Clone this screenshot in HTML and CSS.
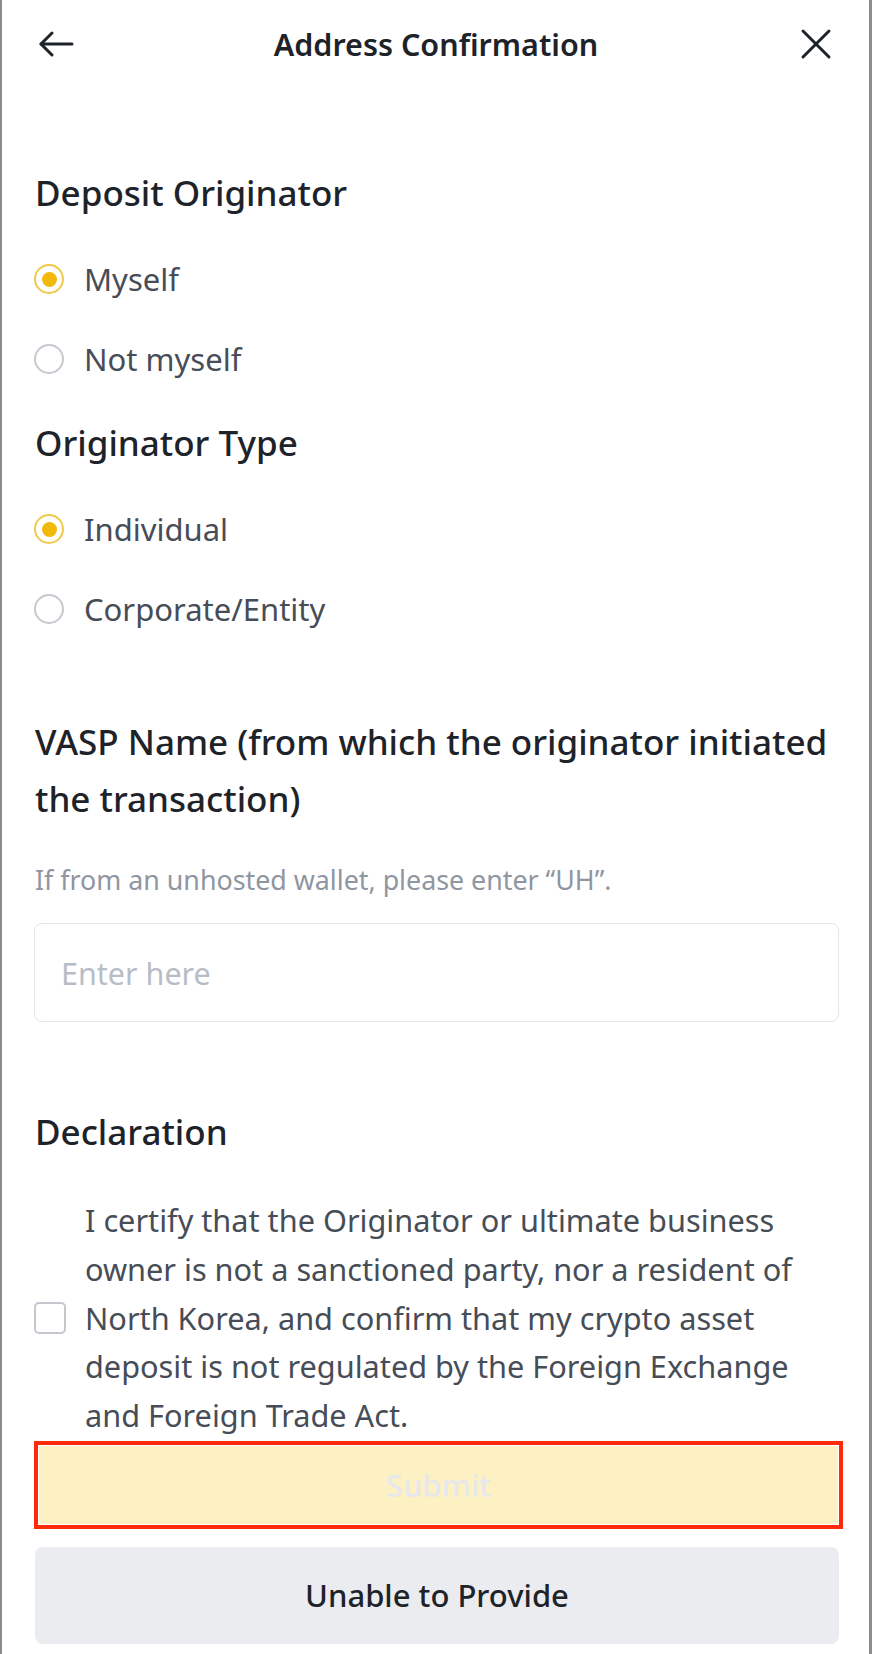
FILE: index.html
```html
<!DOCTYPE html>
<html lang="en">

<head>
    <meta charset="UTF-8">
    <meta name="viewport" content="width=device-width, initial-scale=1.0">
    <title>Address Confirmation</title>
    <link rel="stylesheet" href="styles.css">
</head>

<body>
    <div class="screen">
        <header class="topbar">
            <button class="icon-btn" aria-label="Back">
                <svg width="36" height="28" viewBox="0 0 36 28" fill="none" stroke="#1e2329" stroke-width="3" stroke-linecap="round" stroke-linejoin="round">
                    <path d="M34 14H3"/>
                    <path d="M14 3L3 14l11 11"/>
                </svg>
            </button>
            <h1>Address Confirmation</h1>
            <button class="icon-btn" aria-label="Close">
                <svg width="32" height="32" viewBox="0 0 32 32" fill="none" stroke="#1e2329" stroke-width="3" stroke-linecap="round">
                    <path d="M3 3l26 26"/>
                    <path d="M29 3L3 29"/>
                </svg>
            </button>
        </header>

        <main class="content">
            <h2 class="section-title">Deposit Originator</h2>
            <div class="radio-group">
                <label class="radio-row">
                    <span class="radio checked"></span>
                    Myself
                </label>
                <label class="radio-row">
                    <span class="radio"></span>
                    Not myself
                </label>
            </div>

            <h2 class="section-title">Originator Type</h2>
            <div class="radio-group">
                <label class="radio-row">
                    <span class="radio checked"></span>
                    Individual
                </label>
                <label class="radio-row">
                    <span class="radio"></span>
                    Corporate/Entity
                </label>
            </div>

            <h2 class="section-title vasp-title">VASP Name (from which the originator initiated the transaction)</h2>
            <p class="hint">If from an unhosted wallet, please enter “UH”.</p>
            <input class="text-input" type="text" placeholder="Enter here">

            <h2 class="section-title declaration-title">Declaration</h2>
            <label class="declaration-row">
                <span class="checkbox"></span>
                <span class="declaration-text">I certify that the Originator or ultimate business owner is not a sanctioned party, nor a resident of North Korea, and confirm that my crypto asset deposit is not regulated by the Foreign Exchange and Foreign Trade Act.</span>
            </label>

            <button class="btn btn-submit" disabled>Submit</button>
            <button class="btn btn-secondary">Unable to Provide</button>
        </main>
    </div>
</body>

</html>
```

FILE: styles.css
```css
/* 页面基本样式 */
body {
    font-family: "Noto Sans", "Open Sans", sans-serif;
    background-color: #fff;
    margin: 0;
    padding: 0;
}

.screen {
    min-height: 1654px;
    box-sizing: border-box;
    border-left: 2px solid #8c8c8c;
    border-right: 3px solid #8c8c8c;
}

/* 顶部导航 */
.topbar {
    height: 88px;
    display: flex;
    align-items: center;
    justify-content: space-between;
    padding: 0 35px 0 36px;
}

.topbar h1 {
    margin: 0;
    font-size: 30.5px;
    font-weight: 600;
    color: #1e2329;
}

.icon-btn {
    width: 36px;
    height: 36px;
    padding: 0;
    border: none;
    background: none;
    display: flex;
    align-items: center;
    justify-content: center;
}

/* 表单内容 */
.content {
    padding: 85px 30px 0 33px;
}

.section-title {
    margin: 0 0 26px;
    font-size: 35px;
    line-height: 40px;
    font-weight: 500;
    color: #1e2329;
}

.radio-group + .section-title {
    margin-top: 24px;
}

.radio-row {
    height: 80px;
    display: flex;
    align-items: center;
    gap: 20px;
    font-size: 31px;
    color: #474d57;
}

.radio {
    width: 30px;
    height: 30px;
    margin-left: -1px;
    box-sizing: border-box;
    border: 2px solid #c5c8ce;
    border-radius: 50%;
    display: flex;
    align-items: center;
    justify-content: center;
}

.radio.checked {
    border-color: #f0c94a;
}

.radio.checked::after {
    content: "";
    width: 15px;
    height: 15px;
    border-radius: 50%;
    background-color: #f0b90b;
}

.vasp-title {
    margin-top: 64px !important;
    margin-bottom: 0;
    line-height: 57px;
}

.hint {
    margin: 38px 0 0;
    font-size: 26.8px;
    line-height: 30px;
    color: #8f96a1;
}

.text-input {
    display: block;
    width: calc(100% + 1px);
    height: 99px;
    margin: 28px 0 0 -1px;
    padding: 0 26px;
    box-sizing: border-box;
    border: 1px solid #e4e6e9;
    border-radius: 8px;
    font-family: inherit;
    font-size: 30.5px;
    color: #1e2329;
}

.text-input::placeholder {
    color: #b7bdc6;
}

.declaration-title {
    margin: 90px 0 0;
}

.declaration-row {
    display: flex;
    align-items: center;
    gap: 19px;
    margin-top: 44px;
}

.checkbox {
    flex: none;
    width: 32px;
    height: 32px;
    margin-left: -1px;
    box-sizing: border-box;
    border: 2px solid #c5c8ce;
    border-radius: 5px;
}

.declaration-text {
    font-size: 30.7px;
    line-height: 48.75px;
    color: #474d57;
}

/* 按钮 */
.btn {
    display: block;
    width: 100%;
    font-family: inherit;
    font-size: 31px;
    font-weight: 500;
    border-radius: 8px;
    cursor: pointer;
}

.btn-submit {
    width: calc(100% + 5px);
    height: 88px;
    margin: 1px 0 0 -1px;
    background-color: #fdf1c3;
    border: 4px solid #ff2a0a;
    border-radius: 0;
    box-shadow: inset 0 0 0 1px #fff;
    color: #e6e8ec;
}

.btn-secondary {
    height: 97px;
    margin-top: 18px;
    background-color: #eaecef;
    border: none;
    color: #1e2329;
}
```
